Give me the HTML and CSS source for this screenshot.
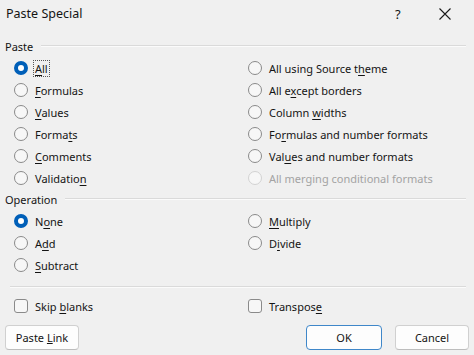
FILE: index.html
```html
<!DOCTYPE html>
<html lang="en">
<head>
  <meta charset="UTF-8" />
  <title>Paste Special</title>
  <link rel="stylesheet" href="styles.css">
</head>
<body>
  <div class="dialog">
    <div class="titlebar">
      <span class="title">Paste Special</span>
      <span class="help">?</span>
      <span class="close">
        <svg width="12" height="12" viewBox="0 0 12 12"><path d="M0.5 0.5 L11.5 11.5 M11.5 0.5 L0.5 11.5" stroke="#1a1a1a" stroke-width="1.1" fill="none"/></svg>
      </span>
    </div>

    <div class="group-head first"><span>Paste</span><div class="rule"></div></div>
    <div class="options">
      <label class="opt"><span class="radio on"></span><span class="focus"><u>A</u>ll</span></label>
      <label class="opt"><span class="radio"></span><span>All using Source t<u>h</u>eme</span></label>
      <label class="opt"><span class="radio"></span><span><u>F</u>ormulas</span></label>
      <label class="opt"><span class="radio"></span><span>All e<u>x</u>cept borders</span></label>
      <label class="opt"><span class="radio"></span><span><u>V</u>alues</span></label>
      <label class="opt"><span class="radio"></span><span>Column <u>w</u>idths</span></label>
      <label class="opt"><span class="radio"></span><span>Forma<u>t</u>s</span></label>
      <label class="opt"><span class="radio"></span><span>Fo<u>r</u>mulas and number formats</span></label>
      <label class="opt"><span class="radio"></span><span><u>C</u>omments</span></label>
      <label class="opt"><span class="radio"></span><span>Val<u>u</u>es and number formats</span></label>
      <label class="opt"><span class="radio"></span><span>Validatio<u>n</u></span></label>
      <label class="opt disabled"><span class="radio"></span><span>All merging conditional formats</span></label>
    </div>

    <div class="group-head"><span>Operation</span><div class="rule"></div></div>
    <div class="options">
      <label class="opt"><span class="radio on"></span><span>N<u>o</u>ne</span></label>
      <label class="opt"><span class="radio"></span><span><u>M</u>ultiply</span></label>
      <label class="opt"><span class="radio"></span><span>A<u>d</u>d</span></label>
      <label class="opt"><span class="radio"></span><span>D<u>i</u>vide</span></label>
      <label class="opt"><span class="radio"></span><span><u>S</u>ubtract</span></label>
    </div>

    <div class="rule full"></div>

    <div class="options checks">
      <label class="opt"><span class="check"></span><span>Skip <u>b</u>lanks</span></label>
      <label class="opt"><span class="check"></span><span>Transpos<u>e</u></span></label>
    </div>

    <div class="buttons">
      <button class="btn">Paste <u>L</u>ink</button>
      <div class="spacer"></div>
      <button class="btn default">OK</button>
      <button class="btn">Cancel</button>
    </div>
  </div>
</body>
</html>
```

FILE: styles.css
```css
* { box-sizing: border-box; margin: 0; padding: 0; }
html, body {
  width: 100%; height: 100%;
  background: #f0f0f0;
  color: #141414;
  font-family: 'Noto Sans', 'Open Sans', sans-serif;
  font-size: 11px;
}
.dialog {
  width: 474px;
  height: 355px;
  display: flex;
  flex-direction: column;
}
.titlebar {
  height: 27px;
  display: flex;
  align-items: center;
  padding-left: 6px;
}
.title {
  font-size: 12.5px;
  flex: 1;
}
.help {
  font-size: 13px;
  width: 14px;
  margin-right: 30px;
}
.close {
  display: flex;
  margin-right: 23px;
}
.group-head {
  height: 20px;
  display: flex;
  align-items: center;
  padding: 0 8px 0 5px;
  gap: 8px;
}
.group-head.first { margin-top: 9px; }
.rule {
  flex: 1;
  height: 2px;
  border-top: 1px solid #dadada;
  border-bottom: 1px solid #fbfbfb;
}
.rule.full {
  flex: none;
  margin: 10px 8px 6px 10px;
}
.options {
  display: grid;
  grid-template-columns: 234px 1fr;
  grid-auto-rows: 22px;
  padding-left: 14px;
}
.group-head + .options { margin-top: 1px; }
.opt {
  display: flex;
  align-items: center;
  gap: 7px;
  white-space: nowrap;
}
.opt u { text-underline-offset: 2px; }
.radio {
  width: 14px;
  height: 14px;
  border-radius: 50%;
  border: 1px solid #8a8a8a;
  background: #f7f7f7;
  flex: none;
}
.radio.on {
  border: 4px solid #005fb8;
  background: #fff;
}
.disabled { color: #a3a3a3; }
.disabled .radio { border-color: #d2d2d2; }
.focus {
  outline: 1px dotted #555;
  padding: 0 1px;
  margin-left: -1px;
}
.check {
  width: 14px;
  height: 14px;
  border: 1px solid #8a8a8a;
  border-radius: 3px;
  background: #f7f7f7;
  flex: none;
}
.checks { grid-auto-rows: 24px; }
.buttons {
  display: flex;
  gap: 13px;
  padding: 7px 5px 0 5px;
}
.spacer { flex: 1; }
.btn {
  width: 74px;
  height: 25px;
  font-family: inherit;
  font-size: 11px;
  color: #141414;
  background: #fdfdfd;
  border: 1px solid #d0d0d0;
  border-bottom-color: #bdbdbd;
  border-radius: 4px;
}
.btn.default {
  width: 76px;
  border: 1px solid #3f87c9;
}
```
